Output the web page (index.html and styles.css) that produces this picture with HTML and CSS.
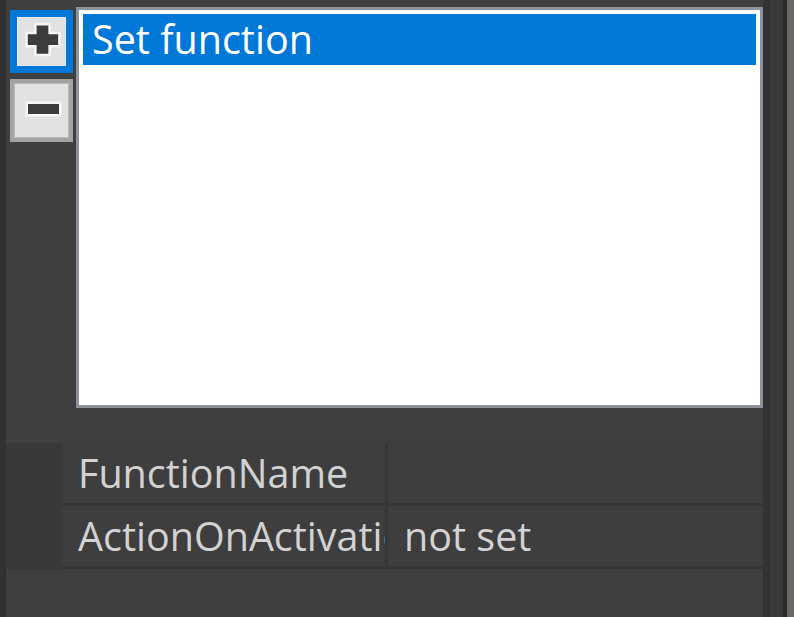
FILE: index.html
```html
<!DOCTYPE html>
<html lang="en">
<head>
    <meta charset="UTF-8">
    <title>Functions</title>
    <link rel="stylesheet" href="styles.css">
</head>
<body>
    <div class="edge-left"></div>

    <div class="panel">
        <div class="top">
            <div class="tools">
                <button class="tool tool-active" title="Add">
                    <svg width="49" height="49" viewBox="0 0 49 49">
                        <path d="M19 5h12v9h10v11h-10v9h-12v-9h-9v-11h9z" fill="#3c3c3c" stroke="#f6f6f6" stroke-width="5" paint-order="stroke"/>
                    </svg>
                </button>
                <button class="tool" title="Remove">
                    <svg width="49" height="49" viewBox="0 0 49 49">
                        <rect x="10" y="17" width="31" height="10" fill="#3c3c3c" stroke="#f6f6f6" stroke-width="5" paint-order="stroke"/>
                    </svg>
                </button>
            </div>

            <div class="list">
                <div class="list-item selected">Set function</div>
            </div>
        </div>

        <div class="grid">
            <div class="grid-row">
                <div class="gutter"></div>
                <div class="cell name">FunctionName</div>
                <div class="cell value"></div>
            </div>
            <div class="grid-row">
                <div class="gutter"></div>
                <div class="cell name">ActionOnActivation</div>
                <div class="cell value">not set</div>
            </div>
        </div>
    </div>

    <div class="edge-right">
        <div class="strip strip-a"></div>
        <div class="strip strip-b"></div>
        <div class="strip strip-c"></div>
        <div class="strip strip-d"></div>
    </div>
</body>
</html>
```

FILE: styles.css
```css
body {
    margin: 0;
    width: 794px;
    height: 617px;
    overflow: hidden;
    display: flex;
    background-color: #3f3f3f;
    font-family: "Open Sans", "Noto Sans", sans-serif;
    color: #d2d2d2;
}
.edge-left {
    width: 6px;
    background-color: #323232;
}
.panel {
    width: 757px;
    display: flex;
    flex-direction: column;
}
.top {
    display: flex;
    padding: 7px 0 0 4px;
}
.tools {
    display: flex;
    flex-direction: column;
    gap: 6px;
    margin-top: 3px;
}
.tool {
    width: 63px;
    height: 63px;
    box-sizing: border-box;
    padding: 0;
    display: flex;
    align-items: flex-start;
    justify-content: flex-start;
    background-color: #e1e1e1;
    border: 4px solid #a3a3a3;
    box-shadow: inset 0 0 0 1px #b9b9b9;
}
.tool svg {
    display: block;
    margin: 4px 0 0 4px;
}
.tool-active {
    border: 7px solid #0078d7;
    box-shadow: inset 0 0 0 1px #eaeaea;
}
.tool-active svg {
    margin: 3px 0 0 1px;
}
.list {
    width: 687px;
    height: 401px;
    box-sizing: border-box;
    margin-left: 3px;
    padding: 3px;
    background-color: #ffffff;
    border: 3px solid #8e939b;
}
.list-item {
    height: 51px;
    line-height: 50px;
    padding-left: 9px;
    font-size: 39.5px;
    color: #222;
    white-space: nowrap;
}
.list-item.selected {
    margin: 1px 1px 0;
    background-color: #0078d7;
    color: #ffffff;
}
.grid {
    margin-top: 35px;
}
.grid-row {
    display: flex;
    height: 63px;
}
.gutter {
    width: 56px;
    background-color: #393939;
}
.cell {
    height: 60px;
    line-height: 60px;
    padding-left: 16px;
    font-size: 39.5px;
    white-space: nowrap;
    overflow: hidden;
    border-bottom: 3px solid #363636;
    background-color: #3e3e3e;
}
.name {
    width: 307px;
}
.value {
    flex: 1;
    border-left: 3px solid #363636;
}
.edge-right {
    display: flex;
}
.strip {
    height: 100%;
}
.strip-a {
    width: 7px;
    background-color: #333333;
}
.strip-b {
    width: 13px;
    background-color: #3b3b3b;
}
.strip-c {
    width: 4px;
    background-color: #2a2a2a;
}
.strip-d {
    width: 7px;
    background-color: #6b6661;
}
```
